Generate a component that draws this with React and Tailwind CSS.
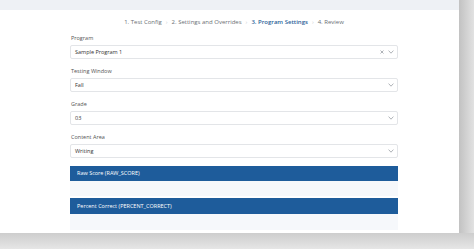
import React from "react";

const Chevron = () => (
  <svg width="6" height="4" viewBox="0 0 6 4" className="block">
    <path d="M0.6 0.6 L3 3.2 L5.4 0.6" fill="none" stroke="#9aa0a6" strokeWidth="0.8" />
  </svg>
);

const Cross = () => (
  <svg width="4" height="4" viewBox="0 0 4 4" className="block">
    <path d="M0.5 0.5 L3.5 3.5 M3.5 0.5 L0.5 3.5" fill="none" stroke="#9aa0a6" strokeWidth="0.8" />
  </svg>
);

function Field({ label, value, clearable }) {
  return (
    <div className="flex flex-col">
      <div className="h-[8px] leading-[8px] text-[5.5px] text-[#555] mb-[3px] pl-[1px]">{label}</div>
      <div className="h-[14px] border border-[#e3e5e8] rounded-[2px] bg-white flex items-center pl-[4px] pr-[3px]">
        <span className="flex-1 text-[5.5px] text-[#333]">{value}</span>
        {clearable && (
          <span className="mr-[4px]">
            <Cross />
          </span>
        )}
        <Chevron />
      </div>
    </div>
  );
}

function Sep() {
  return <span className="text-[#c9cdd2] text-[6px] mx-[4px]">›</span>;
}

export default function App() {
  return (
    <div
      className="w-[474px] h-[249px] bg-[#eef1f5] flex flex-col overflow-hidden"
      style={{ fontFamily: '"Open Sans", "Noto Sans", sans-serif' }}
    >
      <div className="flex h-[233px]">
        <div className="w-[459px] flex flex-col">
          <div className="h-[10px] bg-[#eef1f5]" />
          <div className="flex-1 bg-white flex flex-col">
            <div className="mt-[7px] h-[10px] leading-[10px] flex justify-center items-center text-[6px] text-[#6b6f75] pl-[9px]">
              <span>1. Test Config</span>
              <Sep />
              <span>2. Settings and Overrides</span>
              <Sep />
              <span className="text-[#2b5f98] font-semibold">3. Program Settings</span>
              <Sep />
              <span>4. Review</span>
            </div>
            <div className="ml-[70px] w-[328px] mt-[7px] flex flex-col gap-[8px]">
              <Field label="Program" value="Sample Program 1" clearable />
              <Field label="Testing Window" value="Fall" />
              <Field label="Grade" value="03" />
              <Field label="Content Area" value="Writing" />
              <div className="flex flex-col">
                <div className="h-[15px] bg-[#1e5c9b] flex items-center pl-[7px] text-[5.5px] text-white">
                  Raw Score (RAW_SCORE)
                </div>
                <div className="h-[15px] bg-[#f6f8fb]" />
                <div className="h-[2px]" />
                <div className="h-[16px] bg-[#1e5c9b] flex items-center pl-[7px] text-[5.5px] text-white">
                  Percent Correct (PERCENT_CORRECT)
                </div>
                <div className="h-[16px] bg-[#f6f8fb]" />
              </div>
            </div>
          </div>
        </div>
        <div className="flex-1 bg-gradient-to-r from-[#c2c2c2] to-[#e2e2e2]" />
      </div>
      <div className="flex-1 bg-gradient-to-b from-[#cdcdcd] to-[#e6e6e6]" />
    </div>
  );
}
